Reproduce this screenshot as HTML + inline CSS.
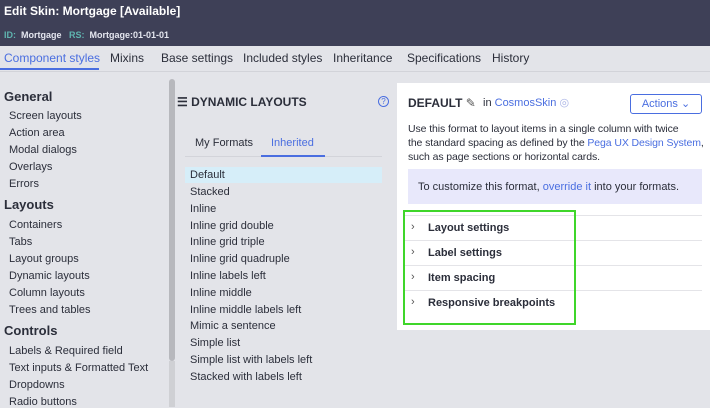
<!DOCTYPE html><html><head><style>
body{margin:0;width:710px;height:407px;overflow:hidden;background:#e3e4e9;font-family:"Liberation Sans",sans-serif;color:#2b2e3a;position:relative}
.a{position:absolute;white-space:nowrap}
.hd{position:absolute;left:0;top:0;width:710px;height:46px;background:#3e4057}
.t{font-size:12px}
.blue{color:#4a6ee0}
.nav div{position:absolute;left:9px;font-size:11px}
.nav .h{left:4px;font-size:13px;font-weight:bold}
.ls div{position:absolute;left:190px;font-size:11px}
.acc{position:absolute;left:405px;width:297px;height:24px;border-top:1px solid #e4e4e8;font-size:11px;font-weight:bold}
</style></head><body>
<div class="hd"></div>
<div class="a" style="left:4px;top:4px;color:#fff;font-weight:bold;font-size:12px">Edit Skin: Mortgage [Available]</div>
<div class="a" style="left:4px;top:30px;font-size:9px;font-weight:bold;color:#5fb5b0">ID:&nbsp; <span style="color:#e4e6ef">Mortgage</span> &nbsp;&nbsp;RS:&nbsp; <span style="color:#e4e6ef">Mortgage:01-01-01</span></div>
<div class="a t blue" style="left:4px;top:51px">Component styles</div>
<div class="a" style="left:0;top:68px;width:99px;height:2px;background:#4a6ee0"></div>
<div class="a t" style="left:110px;top:51px">Mixins</div>
<div class="a t" style="left:161px;top:51px">Base settings</div>
<div class="a t" style="left:243px;top:51px">Included styles</div>
<div class="a t" style="left:333px;top:51px">Inheritance</div>
<div class="a t" style="left:407px;top:51px">Specifications</div>
<div class="a t" style="left:492px;top:51px">History</div>
<div class="a" style="left:0;top:71px;width:710px;height:1px;background:#d2d3d9"></div>
<div class="nav">
<div class="h" style="top:89px">General</div>
<div style="top:110px">Screen layouts</div><div style="top:127px">Action area</div><div style="top:144px">Modal dialogs</div><div style="top:161px">Overlays</div><div style="top:178px">Errors</div>
<div class="h" style="top:197px">Layouts</div>
<div style="top:219px">Containers</div><div style="top:236px">Tabs</div><div style="top:253px">Layout groups</div><div style="top:270px">Dynamic layouts</div><div style="top:287px">Column layouts</div><div style="top:304px">Trees and tables</div>
<div class="h" style="top:323px">Controls</div>
<div style="top:345px">Labels &amp; Required field</div><div style="top:362px">Text inputs &amp; Formatted Text</div><div style="top:379px">Dropdowns</div><div style="top:396px">Radio buttons</div>
</div>
<div class="a" style="left:169px;top:79px;width:6px;height:282px;background:#b7b8bd;border-radius:3px"></div>
<div class="a" style="left:169px;top:361px;width:6px;height:46px;background:#cfd0d4"></div>
<div class="a" style="left:177px;top:95px;font-size:12px;font-weight:bold">☰ DYNAMIC LAYOUTS</div>
<div class="a" style="left:378px;top:96px;width:9px;height:9px;border:1px solid #4a6ee0;border-radius:50%;font-size:8px;line-height:9px;text-align:center;color:#4a6ee0">?</div>
<div class="a" style="left:195px;top:137px;font-size:11px">My Formats</div>
<div class="a blue" style="left:271px;top:137px;font-size:11px">Inherited</div>
<div class="a" style="left:185px;top:156px;width:197px;height:1px;background:#d3d4da"></div>
<div class="a" style="left:261px;top:155px;width:64px;height:2px;background:#4a6ee0"></div>
<div class="a" style="left:185px;top:167px;width:197px;height:16px;background:#d6eef9"></div>
<div class="ls">
<div style="top:169px">Default</div><div style="top:186px">Stacked</div><div style="top:203px">Inline</div><div style="top:220px">Inline grid double</div><div style="top:236px">Inline grid triple</div><div style="top:253px">Inline grid quadruple</div><div style="top:270px">Inline labels left</div><div style="top:287px">Inline middle</div><div style="top:304px">Inline middle labels left</div><div style="top:320px">Mimic a sentence</div><div style="top:337px">Simple list</div><div style="top:354px">Simple list with labels left</div><div style="top:371px">Stacked with labels left</div>
</div>
<div class="a" style="left:397px;top:83px;width:313px;height:247px;background:#fff"></div>
<div class="a" style="left:408px;top:96px;font-size:12px;font-weight:bold">DEFAULT <span style="font-weight:normal;color:#555">✎</span></div>
<div class="a" style="left:483px;top:96px;font-size:11px">in <span class="blue">CosmosSkin</span> <span style="color:#aab4e6">◎</span></div>
<div class="a blue" style="left:630px;top:94px;width:70px;height:18px;border:1px solid #4a6ee0;border-radius:3px;font-size:11px;line-height:18px;text-align:center">Actions ⌄</div>
<div class="a" style="left:408px;top:122px;font-size:10.5px;line-height:14px;letter-spacing:-0.1px">Use this format to layout items in a single column with twice<br>the standard spacing as defined by the <span class="blue">Pega UX Design System</span>,<br>such as page sections or horizontal cards.</div>
<div class="a" style="left:408px;top:169px;width:294px;height:35px;background:#e8e8fb"></div>
<div class="a" style="left:418px;top:181px;font-size:11px">To customize this format, <span class="blue">override it</span> into your formats.</div>
<div class="acc" style="top:215px"><span style="position:absolute;left:6px;top:5px;font-weight:normal;color:#555">›</span><span style="position:absolute;left:23px;top:6px">Layout settings</span></div>
<div class="acc" style="top:240px"><span style="position:absolute;left:6px;top:5px;font-weight:normal;color:#555">›</span><span style="position:absolute;left:23px;top:6px">Label settings</span></div>
<div class="acc" style="top:265px"><span style="position:absolute;left:6px;top:5px;font-weight:normal;color:#555">›</span><span style="position:absolute;left:23px;top:6px">Item spacing</span></div>
<div class="acc" style="top:290px"><span style="position:absolute;left:6px;top:5px;font-weight:normal;color:#555">›</span><span style="position:absolute;left:23px;top:6px">Responsive breakpoints</span></div>
<div class="a" style="left:403px;top:210px;width:169px;height:111px;border:2px solid #3fd62a"></div>
</body></html>
